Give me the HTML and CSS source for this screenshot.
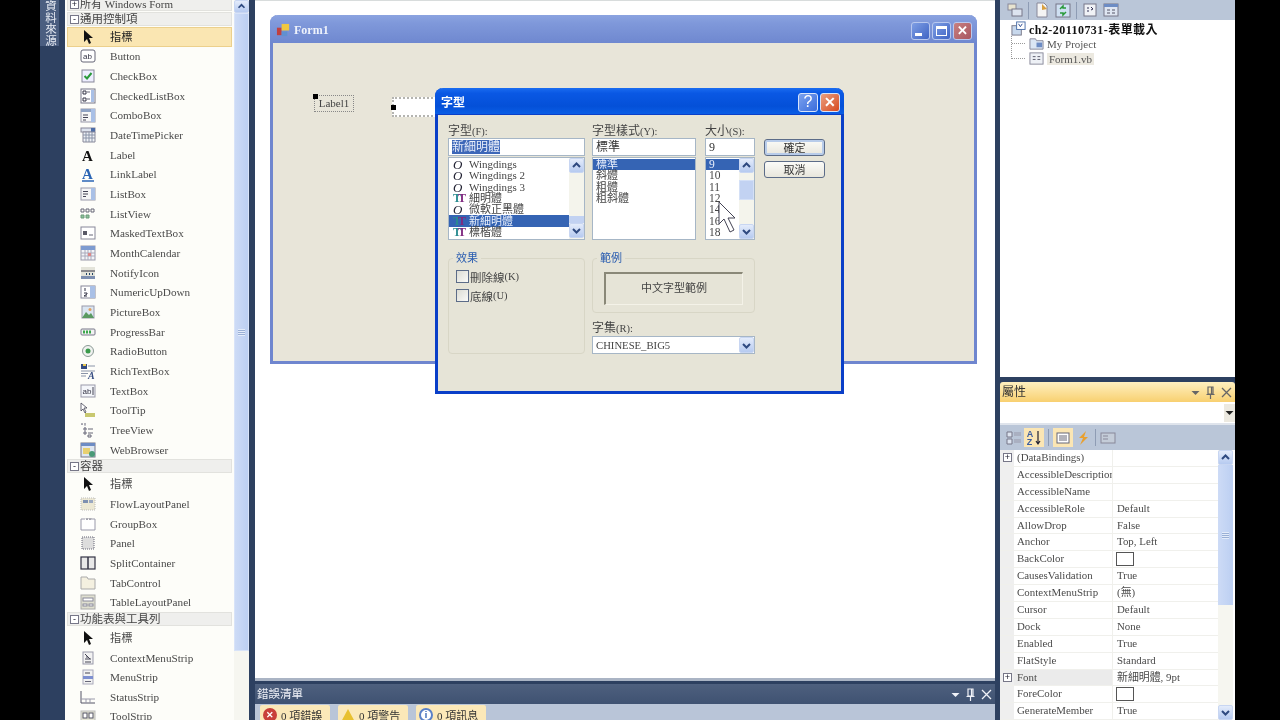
FILE: index.html
```html
<!DOCTYPE html>
<html lang="zh-Hant">
<head>
    <meta charset="UTF-8">
    <title>Form1 - Visual Basic</title>
    <link rel="stylesheet" href="styles.css">
</head>
<body>
    <svg class="defs" width="0" height="0">
        <symbol id="pointer" viewBox="0 0 16 16"><path d="M4 1v12l3-3 2 5 2-1-2-5h4z" fill="#111"/></symbol>
        <symbol id="up" viewBox="0 0 13 13"><path d="M3 8l3.500-3.500L10 8" fill="none" stroke="#2f4a80" stroke-width="2"/></symbol>
        <symbol id="down" viewBox="0 0 13 13"><path d="M3 5l3.500 3.500L10 5" fill="none" stroke="#2f4a80" stroke-width="2"/></symbol>
        <symbol id="pin" viewBox="0 0 11 13"><path d="M3 1h5v7H3zM6.500 1v7M1.500 8.500h8M5.500 9v4" fill="none" stroke="currentColor" stroke-width="1.200"/></symbol>
        <symbol id="caret" viewBox="0 0 9 13"><path d="M0.500 5h8l-4 4z" fill="currentColor"/></symbol>
        <symbol id="cross" viewBox="0 0 11 13"><path d="M1 2l9 9M10 2l-9 9" stroke="currentColor" stroke-width="1.300"/></symbol>
    </svg>

    <div class="app">
        <div class="shell">
            <div class="side-strip">
                <div class="side-tab"><span>資料來源</span></div>
            </div>

            <div class="toolbox">
                <div class="tool-list">
                    <div class="group first"><span class="box">+</span>所有 Windows Form</div>
                    <div class="group"><span class="box">-</span>通用控制項</div>
                    <div class="tool selected"><svg class="ico"><use href="#pointer"/></svg>指標</div>
                    <div class="tool"><svg class="ico" viewBox="0 0 16 16"><rect x="1" y="2" width="14" height="12" rx="2" fill="#fff" stroke="#667"/><text x="3" y="11" class="ico-text">ab</text></svg>Button</div>
                    <div class="tool"><svg class="ico" viewBox="0 0 16 16"><rect x="2" y="2" width="12" height="12" fill="#eef" stroke="#889"/><path d="M4.500 8l2.500 2.500L11.500 5" fill="none" stroke="#2a9a3a" stroke-width="2"/></svg>CheckBox</div>
                    <div class="tool"><svg class="ico" viewBox="0 0 16 16"><rect x="1" y="1" width="14" height="14" fill="#fff" stroke="#778"/><path d="M3 3h3v3H3zM3 10h3v3H3z" fill="none" stroke="#334"/><rect x="11" y="2" width="3" height="12" fill="#a9c0e6"/><path d="M7 4h3M7 11h3" stroke="#667"/></svg>CheckedListBox</div>
                    <div class="tool"><svg class="ico" viewBox="0 0 16 16"><rect x="1" y="2" width="14" height="13" fill="#f6f6f6" stroke="#99a"/><rect x="1" y="2" width="14" height="3" fill="#8fa3c4"/><rect x="11" y="2" width="4" height="13" fill="#a9c0e6"/><path d="M3 8h5M3 10.500h5M3 13h3" stroke="#445"/></svg>ComboBox</div>
                    <div class="tool"><svg class="ico" viewBox="0 0 16 16"><rect x="1" y="1" width="14" height="4" fill="#dde3ee" stroke="#889"/><rect x="11" y="1" width="4" height="4" fill="#4e6ea8"/><path d="M3 5h12v10H3z" fill="#eef1f6" stroke="#889"/><path d="M3 8h12M3 11h12M6 5v10M9 5v10M12 5v10" stroke="#8a94a8"/></svg>DateTimePicker</div>
                    <div class="tool"><svg class="ico" viewBox="0 0 16 16"><text x="2" y="14" class="ico-a">A</text></svg>Label</div>
                    <div class="tool"><svg class="ico" viewBox="0 0 16 16"><text x="2" y="13" class="ico-a link">A</text><path d="M2 15h12" stroke="#2a64b4" stroke-width="1.500"/></svg>LinkLabel</div>
                    <div class="tool"><svg class="ico" viewBox="0 0 16 16"><rect x="1" y="2" width="14" height="12" fill="#f6f6f6" stroke="#99a"/><rect x="11" y="2" width="4" height="12" fill="#a9c0e6"/><path d="M3 5.500h5M3 8h5M3 10.500h3" stroke="#445"/></svg>ListBox</div>
                    <div class="tool"><svg class="ico" viewBox="0 0 16 16"><path d="M1 3h3v3H1zM6 3h3v3H6zM11 3h3v3h-3z" fill="none" stroke="#667"/><path d="M1 9h3v3H1zM6 9h3v3H6z" fill="#8cc39a" stroke="#6a9a78"/></svg>ListView</div>
                    <div class="tool"><svg class="ico" viewBox="0 0 16 16"><rect x="1" y="2" width="14" height="12" fill="#fff" stroke="#889"/><path d="M4 6v4M6 6v4" stroke="#223" stroke-width="1.500"/><path d="M9 10h4" stroke="#667"/></svg>MaskedTextBox</div>
                    <div class="tool"><svg class="ico" viewBox="0 0 16 16"><rect x="1" y="1" width="14" height="14" fill="#f2f4f8" stroke="#99a"/><rect x="1" y="1" width="14" height="4" fill="#7d9bd0"/><path d="M1 8h14M1 11h14M5 5v10M8 5v10M11 5v10" stroke="#aab"/><rect x="8" y="8" width="3" height="3" fill="#d88"/></svg>MonthCalendar</div>
                    <div class="tool"><svg class="ico" viewBox="0 0 16 16"><rect x="1" y="2" width="14" height="12" fill="#e4e4da"/><path d="M1 6h14" stroke="#334"/><rect x="1" y="11" width="14" height="3" fill="#7d8fb0"/><path d="M6 9h1M9 9h1M12 9h1" stroke="#246" stroke-width="2"/></svg>NotifyIcon</div>
                    <div class="tool"><svg class="ico" viewBox="0 0 16 16"><rect x="1" y="2" width="14" height="12" fill="#fff" stroke="#889"/><rect x="10" y="2" width="5" height="12" fill="#a9c0e6"/><path d="M5 4v3M4 9h3v1l-3 2h3" stroke="#334" fill="none"/></svg>NumericUpDown</div>
                    <div class="tool"><svg class="ico" viewBox="0 0 16 16"><rect x="2" y="2" width="12" height="12" fill="#dbe6f2" stroke="#99a"/><path d="M2 14l4-6 3 3 2-2 3 5z" fill="#5a9a62"/><circle cx="10" cy="5.500" r="1.500" fill="#e0a060"/></svg>PictureBox</div>
                    <div class="tool"><svg class="ico" viewBox="0 0 16 16"><rect x="1" y="5" width="14" height="6" rx="1" fill="#f2f2f2" stroke="#778"/><path d="M3 6.500h2v3H3zM6 6.500h2v3H6zM9 6.500h2v3H9z" fill="#3aa64a"/></svg>ProgressBar</div>
                    <div class="tool"><svg class="ico" viewBox="0 0 16 16"><circle cx="8" cy="8" r="5.500" fill="#f0f2f0" stroke="#8a9a94"/><circle cx="8" cy="8" r="2.500" fill="#3a9a4a"/></svg>RadioButton</div>
                    <div class="tool"><svg class="ico" viewBox="0 0 16 16"><rect x="1" y="1" width="6" height="5" fill="#334a80"/><rect x="3" y="1" width="3" height="2" fill="#e8c850"/><path d="M8 3h7M1 8h14M1 10.500h7M1 13h5" stroke="#8a94a8"/><text x="8" y="15.500" class="ico-i">A</text></svg>RichTextBox</div>
                    <div class="tool"><svg class="ico" viewBox="0 0 16 16"><rect x="1" y="2" width="14" height="12" fill="#f4f6fa" stroke="#99a"/><text x="2.500" y="11" class="ico-text">ab</text><path d="M13 4v8" stroke="#445"/></svg>TextBox</div>
                    <div class="tool"><svg class="ico" viewBox="0 0 16 16"><path d="M1 1v8l2-2 2 4 1-1-2-4h3z" fill="#fff" stroke="#445" stroke-width=".8"/><rect x="5" y="11" width="10" height="4" fill="#c8c870"/></svg>ToolTip</div>
                    <div class="tool"><svg class="ico" viewBox="0 0 16 16"><path d="M1 2h2M4 2h2M4 6h2v2H4zM4 10h2v2H4zM8 13h3v2H8zM8 7h5M8 11h5" fill="none" stroke="#667"/><path d="M2 2v1M5 3v8" stroke="#99a" stroke-dasharray="1 1"/></svg>TreeView</div>
                    <div class="tool"><svg class="ico" viewBox="0 0 16 16"><rect x="1" y="1" width="14" height="14" fill="#dfe7f2" stroke="#778"/><rect x="1" y="1" width="14" height="3" fill="#6d8cc4"/><rect x="3" y="6" width="7" height="6" fill="#e8d070"/><circle cx="12" cy="12" r="3" fill="#4a9a78"/></svg>WebBrowser</div>
                    <div class="group"><span class="box">-</span>容器</div>
                    <div class="tool"><svg class="ico"><use href="#pointer"/></svg>指標</div>
                    <div class="tool"><svg class="ico" viewBox="0 0 16 16"><rect x="1" y="2" width="14" height="12" fill="#ece8d4" stroke="#bbb" stroke-dasharray="1 1"/><rect x="3" y="4" width="5" height="3" fill="#7d8fb0"/><rect x="9" y="4" width="4" height="3" fill="#9aa8c0"/></svg>FlowLayoutPanel</div>
                    <div class="tool"><svg class="ico" viewBox="0 0 16 16"><path d="M5 3H1v11h14V3h-4" fill="#fff" stroke="#99a"/><path d="M6 2l1 2M8 2l-1 2M9 2l1 2M11 2l-1 2" stroke="#667" stroke-width=".7"/></svg>GroupBox</div>
                    <div class="tool"><svg class="ico" viewBox="0 0 16 16"><rect x="2" y="2" width="12" height="12" fill="#ddd" stroke="#667" stroke-dasharray="1 1"/></svg>Panel</div>
                    <div class="tool"><svg class="ico" viewBox="0 0 16 16"><rect x="1" y="2" width="14" height="12" fill="#e8e8e8" stroke="#334" stroke-width="1.200"/><path d="M8 2v12" stroke="#334" stroke-width="1.500"/></svg>SplitContainer</div>
                    <div class="tool"><svg class="ico" viewBox="0 0 16 16"><path d="M1 4V2h6l1 2h7v10H1z" fill="#f4f0e0" stroke="#aaa"/></svg>TabControl</div>
                    <div class="tool"><svg class="ico" viewBox="0 0 16 16"><rect x="1" y="1" width="14" height="14" fill="#e0e0d0" stroke="#aaa"/><rect x="3" y="4" width="10" height="3" fill="#fff" stroke="#889"/><rect x="3" y="10" width="4" height="2" fill="#fff" stroke="#889"/><rect x="9" y="10" width="4" height="2" fill="#fff" stroke="#889"/></svg>TableLayoutPanel</div>
                    <div class="group wide"><span class="box">-</span>功能表與工具列</div>
                    <div class="tool"><svg class="ico"><use href="#pointer"/></svg>指標</div>
                    <div class="tool"><svg class="ico" viewBox="0 0 16 16"><rect x="3" y="2" width="10" height="12" fill="#f2f2f2" stroke="#99a"/><path d="M5 4l5 5M5 9h6M5 12h6M6 7h2" stroke="#445"/></svg>ContextMenuStrip</div>
                    <div class="tool"><svg class="ico" viewBox="0 0 16 16"><rect x="3" y="1" width="10" height="14" fill="#f2f2f2" stroke="#aab"/><path d="M5 4h5" stroke="#445"/><rect x="3" y="7" width="10" height="3" fill="#7d8fd0"/><path d="M5 12.500h6" stroke="#667"/></svg>MenuStrip</div>
                    <div class="tool"><svg class="ico" viewBox="0 0 16 16"><path d="M1 2v12h14" fill="none" stroke="#556"/><path d="M1 10h14" stroke="#99a"/><path d="M6 10v4M10 10v4" stroke="#99a"/></svg>StatusStrip</div>
                    <div class="tool"><svg class="ico" viewBox="0 0 16 16"><rect x="1" y="3" width="14" height="10" fill="#e4e4d4" stroke="#bbb"/><rect x="3" y="5" width="4" height="5" fill="#fff" stroke="#556"/><rect x="9" y="5" width="4" height="5" fill="#fff" stroke="#556"/></svg>ToolStrip</div>
                </div>
                <div class="tool-scroll">
                    <div class="arrow-btn"><svg width="13" height="11"><use href="#up"/></svg></div>
                    <div class="tool-thumb"><span class="grip"></span></div>
                </div>
            </div>

            <div class="center">
                <div class="designer">
                    <div class="form-window">
                        <div class="form-title">
                            <svg class="form-icon" viewBox="0 0 16 16"><rect x="1" y="5" width="5" height="8" fill="#c04040"/><rect x="6" y="1" width="8" height="7" fill="#f0c840"/><rect x="6" y="9" width="6" height="5" fill="#6090d0"/></svg>
                            <span class="form-name">Form1</span>
                            <span class="win-btn blue"><span class="min-bar"></span></span>
                            <span class="win-btn blue"><span class="max-box"></span></span>
                            <span class="win-btn red">✕</span>
                        </div>
                    </div>
                    <div class="label-ctl"><span class="handle"></span>Label1</div>
                    <div class="textbox-ctl"><span class="handle"></span></div>

                    <div class="dialog">
                        <div class="dialog-title">
                            <span class="dialog-name">字型</span>
                            <span class="dlg-btn help">?</span>
                            <span class="dlg-btn close">✕</span>
                        </div>
                        <div class="dialog-body">
                            <div class="pick-row">
                                <div class="pick pick-font">
                                    <div class="pick-label">字型<span class="ak">(F):</span></div>
                                    <div class="pick-input"><span class="input-sel">新細明體</span></div>
                                    <div class="pick-list">
                                        <div class="rows">
                                            <div class="font-row"><i class="o">O</i>Wingdings</div>
                                            <div class="font-row"><i class="o">O</i>Wingdings 2</div>
                                            <div class="font-row"><i class="o">O</i>Wingdings 3</div>
                                            <div class="font-row"><span class="tt">T<b>T</b></span>細明體</div>
                                            <div class="font-row"><i class="o">O</i>微軟正黑體</div>
                                            <div class="font-row sel"><span class="tt">T<b>T</b></span>新細明體</div>
                                            <div class="font-row"><span class="tt">T<b>T</b></span>標楷體</div>
                                        </div>
                                        <div class="list-scroll">
                                            <div class="arrow-btn"><svg width="13" height="13"><use href="#up"/></svg></div>
                                            <div class="scroll-gap"></div>
                                            <div class="mini-thumb"></div>
                                            <div class="arrow-btn"><svg width="13" height="13"><use href="#down"/></svg></div>
                                        </div>
                                    </div>
                                </div>
                                <div class="pick pick-style">
                                    <div class="pick-label">字型樣式<span class="ak">(Y):</span></div>
                                    <div class="pick-input">標準</div>
                                    <div class="pick-list">
                                        <div class="rows">
                                            <div class="style-row sel">標準</div>
                                            <div class="style-row">斜體</div>
                                            <div class="style-row">粗體</div>
                                            <div class="style-row">粗斜體</div>
                                        </div>
                                    </div>
                                </div>
                                <div class="pick pick-size">
                                    <div class="pick-label">大小<span class="ak">(S):</span></div>
                                    <div class="pick-input">9</div>
                                    <div class="pick-list">
                                        <div class="rows">
                                            <div class="style-row sel">9</div>
                                            <div class="style-row">10</div>
                                            <div class="style-row">11</div>
                                            <div class="style-row">12</div>
                                            <div class="style-row">14</div>
                                            <div class="style-row">16</div>
                                            <div class="style-row">18</div>
                                        </div>
                                        <div class="list-scroll">
                                            <div class="arrow-btn"><svg width="13" height="13"><use href="#up"/></svg></div>
                                            <div class="size-gap"></div>
                                            <div class="size-thumb"></div>
                                            <div class="scroll-fill"></div>
                                            <div class="arrow-btn"><svg width="13" height="13"><use href="#down"/></svg></div>
                                        </div>
                                    </div>
                                </div>
                                <div class="dlg-actions">
                                    <button class="xp-btn default">確定</button>
                                    <button class="xp-btn">取消</button>
                                </div>
                            </div>
                            <div class="lower-row">
                                <div class="fieldset effects">
                                    <div class="legend">效果</div>
                                    <div class="check"><span class="check-box"></span>刪除線<span class="ak">(K)</span></div>
                                    <div class="check"><span class="check-box"></span>底線<span class="ak">(U)</span></div>
                                </div>
                                <div class="sample-col">
                                    <div class="fieldset sample">
                                        <div class="legend">範例</div>
                                        <div class="sample-box">中文字型範例</div>
                                    </div>
                                    <div class="pick-label charset-label">字集<span class="ak">(R):</span></div>
                                    <div class="charset">CHINESE_BIG5<span class="arrow-btn"><svg width="13" height="13"><use href="#down"/></svg></span></div>
                                </div>
                            </div>
                        </div>
                    </div>

                    <svg class="cursor" viewBox="0 0 18 32"><path d="M1 1v22l5-5 6 13 4-2-6-12h7z" fill="#fff" stroke="#445" stroke-width="1"/></svg>
                </div>

                <div class="errors">
                    <div class="pane-title dark">
                        <span class="pane-name">錯誤清單</span>
                        <span class="pane-tools">
                            <svg width="9" height="13"><use href="#caret"/></svg>
                            <svg width="11" height="13"><use href="#pin"/></svg>
                            <svg width="11" height="13"><use href="#cross"/></svg>
                        </span>
                    </div>
                    <div class="err-tabs">
                        <div class="err-tab"><span class="dot red-dot">✕</span>0 項錯誤</div>
                        <div class="err-tab"><span class="warn"></span>0 項警告</div>
                        <div class="err-tab"><span class="dot info-dot">i</span>0 項訊息</div>
                    </div>
                </div>
            </div>

            <div class="right">
                <div class="solution">
                    <div class="toolbar sol-bar">
                        <svg class="tb-ico" viewBox="0 0 16 16"><rect x="1" y="2" width="8" height="6" fill="#e8e4d0" stroke="#889"/><rect x="5" y="7" width="10" height="7" fill="#dde4f0" stroke="#778"/></svg>
                        <span class="tb-sep"></span>
                        <svg class="tb-ico" viewBox="0 0 16 16"><path d="M3 1h7l3 3v11H3z" fill="#f4f4f4" stroke="#889"/><path d="M8 2l5 5-5 1z" fill="#d8a040"/></svg>
                        <svg class="tb-ico" viewBox="0 0 16 16"><rect x="1" y="2" width="14" height="13" fill="#cfe0f2" stroke="#778"/><path d="M5 7l3-3v2h3M11 10l-3 3v-2H5" stroke="#2a9a3a" stroke-width="1.500" fill="none"/></svg>
                        <span class="tb-sep"></span>
                        <svg class="tb-ico" viewBox="0 0 16 16"><rect x="2" y="2" width="12" height="12" fill="#f0f2f6" stroke="#778"/><path d="M5 6h2M5 9h2M9 5l2 2-2 1" stroke="#335" fill="none"/></svg>
                        <svg class="tb-ico" viewBox="0 0 16 16"><rect x="1" y="2" width="14" height="12" fill="#dfe6f2" stroke="#778"/><rect x="1" y="2" width="14" height="3" fill="#6d8cc4"/><path d="M4 8h3M4 11h3M9 8h3M9 11h3" stroke="#556"/></svg>
                    </div>
                    <div class="tree">
                        <div class="tree-row root"><svg class="tree-ico" viewBox="0 0 16 16"><rect x="1" y="5" width="10" height="10" fill="#c8d8ec" stroke="#778"/><rect x="6" y="1" width="9" height="8" fill="#fff" stroke="#4a6ea8"/><path d="M8 3l2 3 2-3" stroke="#2a4a90" fill="none"/></svg>ch2-20110731-表單載入</div>
                        <div class="tree-kids">
                            <div class="tree-row"><svg class="tree-ico" viewBox="0 0 16 16"><path d="M1 3h6l1 2h7v9H1z" fill="#dbe6f4" stroke="#889"/><rect x="8" y="7" width="6" height="5" fill="#6d8cc4"/></svg>My Project</div>
                            <div class="tree-row"><svg class="tree-ico" viewBox="0 0 16 16"><rect x="1" y="2" width="14" height="12" fill="#eef1f6" stroke="#889"/><path d="M4 6h3M4 9h3M9 6h3M9 9h3" stroke="#556"/></svg><span class="tree-sel">Form1.vb</span></div>
                        </div>
                    </div>
                </div>

                <div class="props">
                    <div class="pane-title gold">
                        <span class="pane-name">屬性</span>
                        <span class="pane-tools">
                            <svg width="9" height="13"><use href="#caret"/></svg>
                            <svg width="11" height="13"><use href="#pin"/></svg>
                            <svg width="11" height="13"><use href="#cross"/></svg>
                        </span>
                    </div>
                    <div class="prop-combo"><span class="combo-btn"><svg width="9" height="13"><use href="#caret"/></svg></span></div>
                    <div class="toolbar prop-bar">
                        <svg class="tb-ico" viewBox="0 0 16 16"><path d="M1 2h5v5H1zM1 9h5v5H1z" fill="#dde4f0" stroke="#778"/><path d="M8 3h7M8 5h7M8 10h7M8 12h7" stroke="#99a"/></svg>
                        <span class="tb-on az"><span class="az-text">A<br>Z</span><svg width="6" height="16" viewBox="0 0 6 16"><path d="M3 1v12M1 11l2 3 2-3" stroke="#223" stroke-width="1.200" fill="none"/></svg></span>
                        <span class="tb-sep"></span>
                        <span class="tb-on"><svg class="tb-ico" viewBox="0 0 16 16"><rect x="2" y="3" width="12" height="10" fill="#fff" stroke="#667"/><path d="M4 6h8M4 8h8M4 10h8" stroke="#667"/></svg></span>
                        <svg class="tb-ico" viewBox="0 0 16 16"><path d="M11 1L4 8h4l-3 7 8-8H9z" fill="#e8a030"/></svg>
                        <span class="tb-sep"></span>
                        <svg class="tb-ico" viewBox="0 0 16 16"><rect x="1" y="3" width="14" height="10" fill="#c4ccd8" stroke="#889"/><path d="M3 6h5M3 9h5" stroke="#889"/></svg>
                    </div>
                    <div class="grid-wrap">
                        <div class="prop-grid">
                            <div class="prop"><span class="gutter"><span class="box">+</span></span><span class="name">(DataBindings)</span><span class="val"></span></div>
                            <div class="prop"><span class="gutter"></span><span class="name">AccessibleDescription</span><span class="val"></span></div>
                            <div class="prop"><span class="gutter"></span><span class="name">AccessibleName</span><span class="val"></span></div>
                            <div class="prop"><span class="gutter"></span><span class="name">AccessibleRole</span><span class="val">Default</span></div>
                            <div class="prop"><span class="gutter"></span><span class="name">AllowDrop</span><span class="val">False</span></div>
                            <div class="prop"><span class="gutter"></span><span class="name">Anchor</span><span class="val">Top, Left</span></div>
                            <div class="prop"><span class="gutter"></span><span class="name">BackColor</span><span class="val"><span class="swatch"></span></span></div>
                            <div class="prop"><span class="gutter"></span><span class="name">CausesValidation</span><span class="val">True</span></div>
                            <div class="prop"><span class="gutter"></span><span class="name">ContextMenuStrip</span><span class="val">(無)</span></div>
                            <div class="prop"><span class="gutter"></span><span class="name">Cursor</span><span class="val">Default</span></div>
                            <div class="prop"><span class="gutter"></span><span class="name">Dock</span><span class="val">None</span></div>
                            <div class="prop"><span class="gutter"></span><span class="name">Enabled</span><span class="val">True</span></div>
                            <div class="prop"><span class="gutter"></span><span class="name">FlatStyle</span><span class="val">Standard</span></div>
                            <div class="prop"><span class="gutter"><span class="box">+</span></span><span class="name on">Font</span><span class="val">新細明體, 9pt</span></div>
                            <div class="prop"><span class="gutter"></span><span class="name">ForeColor</span><span class="val"><span class="swatch"></span></span></div>
                            <div class="prop"><span class="gutter"></span><span class="name">GenerateMember</span><span class="val">True</span></div>
                        </div>
                        <div class="grid-scroll">
                            <div class="arrow-btn"><svg width="13" height="13"><use href="#up"/></svg></div>
                            <div class="grid-thumb"><span class="grip"></span></div>
                            <div class="scroll-fill"></div>
                            <div class="arrow-btn"><svg width="13" height="13"><use href="#down"/></svg></div>
                        </div>
                    </div>
                </div>
            </div>
        </div>
    </div>
</body>
</html>
```

FILE: styles.css
```css
* {
    box-sizing: border-box;
}

body {
    margin: 0;
    background-color: #000;
    font-family: "Liberation Serif", "Noto Sans CJK TC", serif;
    font-size: 12px;
    color: #3a3a3a;
}

.defs {
    position: absolute;
}

.app {
    width: 1280px;
    height: 720px;
    overflow: hidden;
    background-color: #000;
    padding-left: 40px;
    filter: blur(0.35px);
}

.shell {
    display: flex;
    width: 1195px;
    height: 720px;
    background-color: #2d4060;
}

/* left strip */
.side-strip {
    width: 25px;
    flex: none;
}

.side-tab {
    display: flex;
    justify-content: center;
    width: 19px;
    height: 46px;
    background-color: #4b5e80;
    color: #e8ecf4;
    font-size: 11.500px;
    line-height: 19px;
}

.side-tab span {
    writing-mode: vertical-rl;
    white-space: nowrap;
}

/* toolbox */
.toolbox {
    display: flex;
    width: 184px;
    flex: none;
    height: 720px;
    margin-right: 6px;
    background-color: #fdfdf9;
}

.tool-list {
    width: 169px;
    flex: none;
    padding-left: 2px;
    margin-top: -3px;
}

.group {
    display: flex;
    align-items: center;
    width: 165px;
    height: 14px;
    margin-bottom: 1px;
    background-color: #efefed;
    border: 1px solid #e2e2de;
    font-size: 11.500px;
    line-height: 12px;
    color: #444;
    white-space: nowrap;
}

.group.first {
    font-size: 11px;
}

.group.wide {
    margin-bottom: 2px;
}

.box {
    display: inline-flex;
    align-items: center;
    justify-content: center;
    width: 9px;
    height: 9px;
    margin: 0 1px 0 2px;
    border: 1px solid #778;
    background-color: #fff;
    font-family: "Liberation Sans", sans-serif;
    font-size: 9px;
    line-height: 7px;
    color: #223;
    flex: none;
}

.tool {
    display: flex;
    align-items: center;
    height: 19.660px;
    width: 165px;
    padding-left: 13px;
    font-size: 11.200px;
    color: #4a4a4a;
    white-space: nowrap;
    line-height: 12px;
}

.tool.selected {
    background-color: #fae6b2;
    border: 1px solid #ecd08c;
    padding-left: 12px;
    color: #222;
}

.ico {
    width: 16px;
    height: 16px;
    margin-right: 14px;
    flex: none;
}

.ico-text {
    font-family: "Liberation Sans", sans-serif;
    font-size: 8px;
    fill: #334;
}

.ico-a {
    font-family: "Liberation Serif", serif;
    font-size: 15px;
    font-weight: bold;
    fill: #111;
}

.ico-a.link {
    fill: #2a64b4;
}

.ico-i {
    font-family: "Liberation Serif", serif;
    font-size: 10px;
    font-style: italic;
    font-weight: bold;
    fill: #334a80;
}

.tool-scroll {
    width: 15px;
    flex: none;
    background-color: #f6f6f0;
}

.tool-thumb {
    display: flex;
    align-items: center;
    justify-content: center;
    height: 638px;
    background: linear-gradient(to right, #cddbf6, #bccff2);
    border: 1px solid #d8e3f8;
}

.grip {
    display: block;
    width: 7px;
    height: 7px;
    background: repeating-linear-gradient(#e4ecfa 0 1px, #9ab0d6 1px 2px);
}

.arrow-btn {
    display: flex;
    align-items: center;
    justify-content: center;
    background: linear-gradient(#e4ecfb, #b6caf0);
    border: 1px solid #c8d6f2;
    border-radius: 2px;
}

.arrow-btn svg {
    display: block;
}

/* designer */
.center {
    display: flex;
    flex-direction: column;
    width: 740px;
    flex: none;
    height: 720px;
}

.designer {
    position: relative;
    height: 681px;
    flex: none;
    background-color: #fff;
    border-top: 1px solid #d8dcdc;
    border-bottom: 3px solid #aab4c4;
}

.form-window {
    position: absolute;
    left: 15px;
    top: 14px;
    width: 707px;
    height: 349px;
    background-color: #e8e5d9;
    border: 3px solid #6f86cf;
    border-top: none;
    border-radius: 8px 8px 0 0;
}

.form-title {
    display: flex;
    align-items: center;
    height: 28px;
    margin: 0 -3px;
    padding: 3px 5px 0 6px;
    background: linear-gradient(#8ba3e0, #7f98da 30%, #6f88d0);
    border-radius: 8px 8px 0 0;
}

.form-icon {
    width: 15px;
    height: 15px;
    margin-right: 3px;
}

.form-name {
    flex: 1;
    color: #eef2fb;
    font-weight: bold;
    font-size: 12px;
}

.win-btn {
    display: flex;
    align-items: center;
    justify-content: center;
    width: 19px;
    height: 18px;
    margin-left: 2px;
    border-radius: 3px;
    border: 1px solid #b8c8ee;
    color: #fff;
    font-family: "Liberation Sans", sans-serif;
    font-size: 13px;
    font-weight: bold;
}

.win-btn.blue {
    background: linear-gradient(135deg, #7e9ee4, #3f64c4);
}

.win-btn.red {
    background: linear-gradient(135deg, #c88080, #a85660);
}

.min-bar {
    width: 7px;
    height: 3px;
    margin: 7px 5px 0 0;
    background-color: #fff;
}

.max-box {
    width: 11px;
    height: 10px;
    border: 1px solid #fff;
    border-top-width: 3px;
}

.label-ctl {
    position: absolute;
    left: 59px;
    top: 94px;
    width: 40px;
    height: 17px;
    border: 1px dotted #888;
    font-size: 11px;
    line-height: 15px;
    text-align: center;
    color: #444;
}

.textbox-ctl {
    position: absolute;
    left: 137px;
    top: 96px;
    width: 60px;
    height: 20px;
    background-color: #fff;
    border: 2px dotted #b4b4b0;
}

.handle {
    position: absolute;
    width: 5px;
    height: 5px;
    background-color: #000;
    left: -2px;
    top: -2px;
}

.textbox-ctl .handle {
    left: -3px;
    top: 6px;
}

/* font dialog */
.dialog {
    position: absolute;
    left: 180px;
    top: 87px;
    width: 409px;
    height: 306px;
    background-color: #e6e4d7;
    border: 3px solid #0a3fc8;
    border-top: none;
    border-radius: 8px 8px 0 0;
}

.dialog-title {
    display: flex;
    align-items: center;
    height: 27px;
    margin: 0 -3px;
    padding: 2px 4px 0 6px;
    background: linear-gradient(#1a6cf0, #0a58e4 20%, #0450d8 70%, #0a5ee6);
    border-radius: 8px 8px 0 0;
    border-bottom: 1px solid #0a3fc8;
}

.dialog-name {
    flex: 1;
    color: #fff;
    font-weight: bold;
    font-size: 12px;
}

.dlg-btn {
    display: flex;
    align-items: center;
    justify-content: center;
    width: 20px;
    height: 19px;
    margin-left: 2px;
    border: 1px solid #d8e4fa;
    border-radius: 3px;
    color: #fff;
    font-family: "Liberation Sans", sans-serif;
    font-weight: bold;
    font-size: 14px;
}

.dlg-btn.help {
    background: linear-gradient(135deg, #7ba2ee, #3a6cdc);
    font-size: 16px;
    font-weight: normal;
}

.dlg-btn.close {
    background: linear-gradient(135deg, #eaa080, #d84a20);
}

.dialog-body {
    padding: 9px 0 0 10px;
}

.pick-row {
    display: flex;
}

.pick-label {
    height: 14px;
    line-height: 14px;
    color: #444;
}

.ak {
    font-size: 10.500px;
}

.pick-input {
    display: flex;
    align-items: center;
    height: 18px;
    padding: 0 0 0 3px;
    background-color: #fff;
    border: 1px solid #a6b6c6;
    line-height: 14px;
    color: #333;
}

.input-sel {
    background-color: #3d67b8;
    color: #e8eefa;
}

.pick-font {
    width: 137px;
    margin-right: 7px;
}

.pick-style {
    width: 104px;
    margin-right: 9px;
}

.pick-size {
    width: 50px;
    margin-right: 9px;
}

.pick-list {
    display: flex;
    height: 83px;
    margin-top: 1px;
    background-color: #fff;
    border: 1px solid #a6b6c6;
    overflow: hidden;
}

.rows {
    flex: 1;
    min-width: 0;
    padding-top: 1px;
    overflow: hidden;
}

.font-row,
.style-row {
    display: flex;
    align-items: center;
    height: 11.300px;
    font-size: 11px;
    line-height: 11px;
    white-space: nowrap;
    color: #444;
}

.font-row {
    padding-left: 4px;
}

.style-row {
    padding-left: 3px;
}

.pick-size .style-row {
    font-size: 11.500px;
}

.font-row.sel,
.style-row.sel {
    background-color: #3564b4;
    color: #eaf0fc;
}

.o {
    width: 16px;
    font-family: "Liberation Serif", serif;
    font-size: 13px;
    color: #223;
    flex: none;
}

.tt {
    width: 16px;
    font-family: "Liberation Serif", serif;
    font-size: 12px;
    font-weight: bold;
    color: #2a8c90;
    flex: none;
}

.tt b {
    margin-left: -3px;
    color: #802a80;
}

.list-scroll {
    display: flex;
    flex-direction: column;
    width: 15px;
    flex: none;
    background-color: #f4f4ec;
}

.list-scroll .arrow-btn {
    height: 15px;
    flex: none;
}

.scroll-gap {
    height: 43px;
    flex: none;
}

.mini-thumb {
    height: 7px;
    flex: none;
    background-color: #c2d2f2;
}

.size-gap {
    height: 7px;
    flex: none;
}

.size-thumb {
    height: 20px;
    flex: none;
    background-color: #c2d2f2;
    border: 1px solid #d4e0f6;
}

.scroll-fill {
    flex: 1;
}

.dlg-actions {
    display: flex;
    flex-direction: column;
    gap: 5px;
    padding-top: 15px;
}

.xp-btn {
    width: 61px;
    height: 17px;
    padding: 0;
    background: linear-gradient(#fbfbf8, #e8e6dc);
    border: 1px solid #5c6c88;
    border-radius: 3px;
    font-family: inherit;
    font-size: 11px;
    line-height: 14px;
    color: #333;
}

.xp-btn.default {
    box-shadow: inset 0 0 0 2px #b8ccea;
}

.lower-row {
    display: flex;
    gap: 7px;
    margin-top: 18px;
}

.fieldset {
    position: relative;
    border: 1px solid #d8d6c6;
    border-radius: 4px;
}

.legend {
    position: absolute;
    left: 4px;
    top: -8px;
    padding: 0 3px;
    background-color: #e6e4d7;
    font-size: 11px;
    line-height: 14px;
    color: #2a5cb0;
}

.effects {
    width: 137px;
    height: 96px;
    padding: 8px 0 0 7px;
}

.check {
    display: flex;
    align-items: center;
    height: 19px;
    font-size: 11.500px;
    color: #444;
}

.check-box {
    width: 13px;
    height: 13px;
    margin-right: 1px;
    background: linear-gradient(135deg, #dcdcd4, #fafaf8);
    border: 1px solid #5c6c88;
}

.sample-col {
    width: 163px;
}

.sample {
    height: 55px;
    padding: 13px 11px 0;
}

.sample-box {
    height: 33px;
    border: 1px solid;
    border-color: #8a8878 #f4f2e8 #f4f2e8 #8a8878;
    border-width: 2px 1px 1px 2px;
    font-size: 11px;
    line-height: 29px;
    text-align: center;
    color: #444;
}

.charset-label {
    margin-top: 8px;
}

.charset {
    display: flex;
    align-items: center;
    justify-content: space-between;
    height: 18px;
    margin-top: 1px;
    padding-left: 3px;
    background-color: #fff;
    border: 1px solid #a6b6c6;
    font-size: 10.700px;
    color: #444;
}

.charset .arrow-btn {
    width: 15px;
    height: 16px;
}

.cursor {
    position: absolute;
    left: 463px;
    top: 200px;
    width: 18px;
    height: 32px;
}

/* error list */
.errors {
    display: flex;
    flex-direction: column;
    margin-top: 3px;
    flex: 1;
}

.pane-title {
    display: flex;
    align-items: center;
    justify-content: space-between;
    height: 20px;
    flex: none;
    padding: 0 3px 0 2px;
}

.pane-title.dark {
    background: linear-gradient(#4e607e, #3f5272);
    color: #f0f2f8;
    font-size: 11.500px;
}

.pane-title.gold {
    background: linear-gradient(#fff0c0, #f8d070);
    color: #333;
    border-radius: 3px 3px 0 0;
}

.pane-name {
    padding-bottom: 2px;
}

.pane-title.gold .pane-tools {
    color: #666;
}

.pane-tools {
    display: flex;
    align-items: center;
    gap: 5px;
}

.err-tabs {
    display: flex;
    gap: 8px;
    flex: 1;
    padding: 1px 0 0 5px;
    background-color: #b9c5d8;
}

.err-tab {
    display: flex;
    align-items: center;
    gap: 4px;
    width: 70px;
    height: 20px;
    padding-left: 3px;
    background-color: #fbe8b8;
    border-radius: 2px;
    font-size: 11px;
    color: #333;
    white-space: nowrap;
}

.dot {
    display: inline-flex;
    align-items: center;
    justify-content: center;
    width: 14px;
    height: 14px;
    border-radius: 50%;
    font-family: "Liberation Sans", sans-serif;
    font-size: 9px;
    font-weight: bold;
    color: #fff;
    flex: none;
}

.red-dot {
    background-color: #c8403a;
}

.info-dot {
    background-color: #fff;
    color: #2a5cb0;
    border: 2px solid #5a80c8;
}

.warn {
    width: 0;
    height: 0;
    border-left: 7px solid transparent;
    border-right: 7px solid transparent;
    border-bottom: 13px solid #e8c030;
    flex: none;
}

/* right panels */
.right {
    display: flex;
    flex-direction: column;
    width: 235px;
    margin-left: 5px;
    flex: none;
    height: 720px;
}

.toolbar {
    display: flex;
    align-items: center;
    background-color: #bac6d8;
}

.tb-ico {
    width: 16px;
    height: 16px;
    flex: none;
}

.tb-sep {
    width: 1px;
    height: 17px;
    background-color: #8e9cb4;
    flex: none;
}

.sol-bar {
    height: 20px;
    padding-left: 7px;
    gap: 5px;
}

.solution {
    height: 377px;
    flex: none;
    background-color: #fff;
}

.tree {
    padding: 1px 0 0 11px;
}

.tree-row {
    display: flex;
    align-items: center;
    height: 15px;
    font-size: 11px;
    color: #555;
    white-space: nowrap;
}

.tree-row.root {
    height: 15px;
    font-size: 12px;
    letter-spacing: 0.450px;
    color: #111;
    font-weight: bold;
}

.tree-kids {
    height: 23px;
    border-left: 1px dotted #999;
}

.tree-kids .tree-row::before {
    content: "";
    width: 13px;
    margin-right: 4px;
    border-bottom: 1px dotted #999;
    flex: none;
}

.tree-ico {
    width: 15px;
    height: 15px;
    margin-right: 3px;
    flex: none;
}

.tree-sel {
    padding: 0 2px;
    background-color: #ece9e0;
}

.props {
    display: flex;
    flex-direction: column;
    margin-top: 5px;
    flex: 1;
    min-height: 0;
}

.prop-combo {
    display: flex;
    justify-content: flex-end;
    align-items: center;
    height: 23px;
    flex: none;
    background-color: #fff;
    border-bottom: 2px solid #dfe4ec;
}

.combo-btn {
    display: flex;
    justify-content: center;
    align-items: center;
    width: 11px;
    height: 18px;
    background-color: #ece9e0;
    color: #222;
}

.prop-bar {
    height: 25px;
    flex: none;
    padding-left: 6px;
    gap: 2px;
}

.prop-bar .tb-sep {
    margin: 0 2px;
}

.tb-on {
    display: flex;
    align-items: center;
    justify-content: center;
    height: 19px;
    padding: 0 2px;
    background-color: #fbe6b4;
    flex: none;
}

.az {
    gap: 2px;
    width: 20px;
}

.az-text {
    font-family: "Liberation Sans", sans-serif;
    font-size: 9px;
    font-weight: bold;
    line-height: 8px;
    color: #3a5ca0;
}

.grid-wrap {
    display: flex;
    flex: 1;
    min-height: 0;
    background-color: #fff;
}

.prop-grid {
    width: 218px;
    flex: none;
}

.prop {
    display: flex;
    height: 16.900px;
    border-bottom: 1px solid #f0f0ec;
    font-size: 10.900px;
    white-space: nowrap;
    line-height: 14px;
}

.gutter {
    display: flex;
    align-items: center;
    width: 14px;
    background-color: #efefef;
    flex: none;
}

.gutter .box {
    margin: 0 0 0 3px;
}

.name {
    width: 99px;
    padding-left: 3px;
    border-right: 1px solid #f0f0ec;
    overflow: hidden;
    color: #4a4a4a;
    flex: none;
}

.name.on {
    background-color: #ebebeb;
}

.val {
    display: flex;
    align-items: flex-start;
    padding-left: 4px;
    color: #4a4a4a;
}

.swatch {
    width: 18px;
    height: 14px;
    margin: 1px 0 0 -1px;
    background-color: #fff;
    border: 1px solid #555;
}

.grid-scroll {
    display: flex;
    flex-direction: column;
    width: 15px;
    flex: none;
    background-color: #f6f6f0;
}

.grid-scroll .arrow-btn {
    height: 15px;
    flex: none;
}

.grid-thumb {
    display: flex;
    align-items: center;
    justify-content: center;
    height: 140px;
    flex: none;
    background: linear-gradient(to right, #cddbf6, #bccff2);
}
```
